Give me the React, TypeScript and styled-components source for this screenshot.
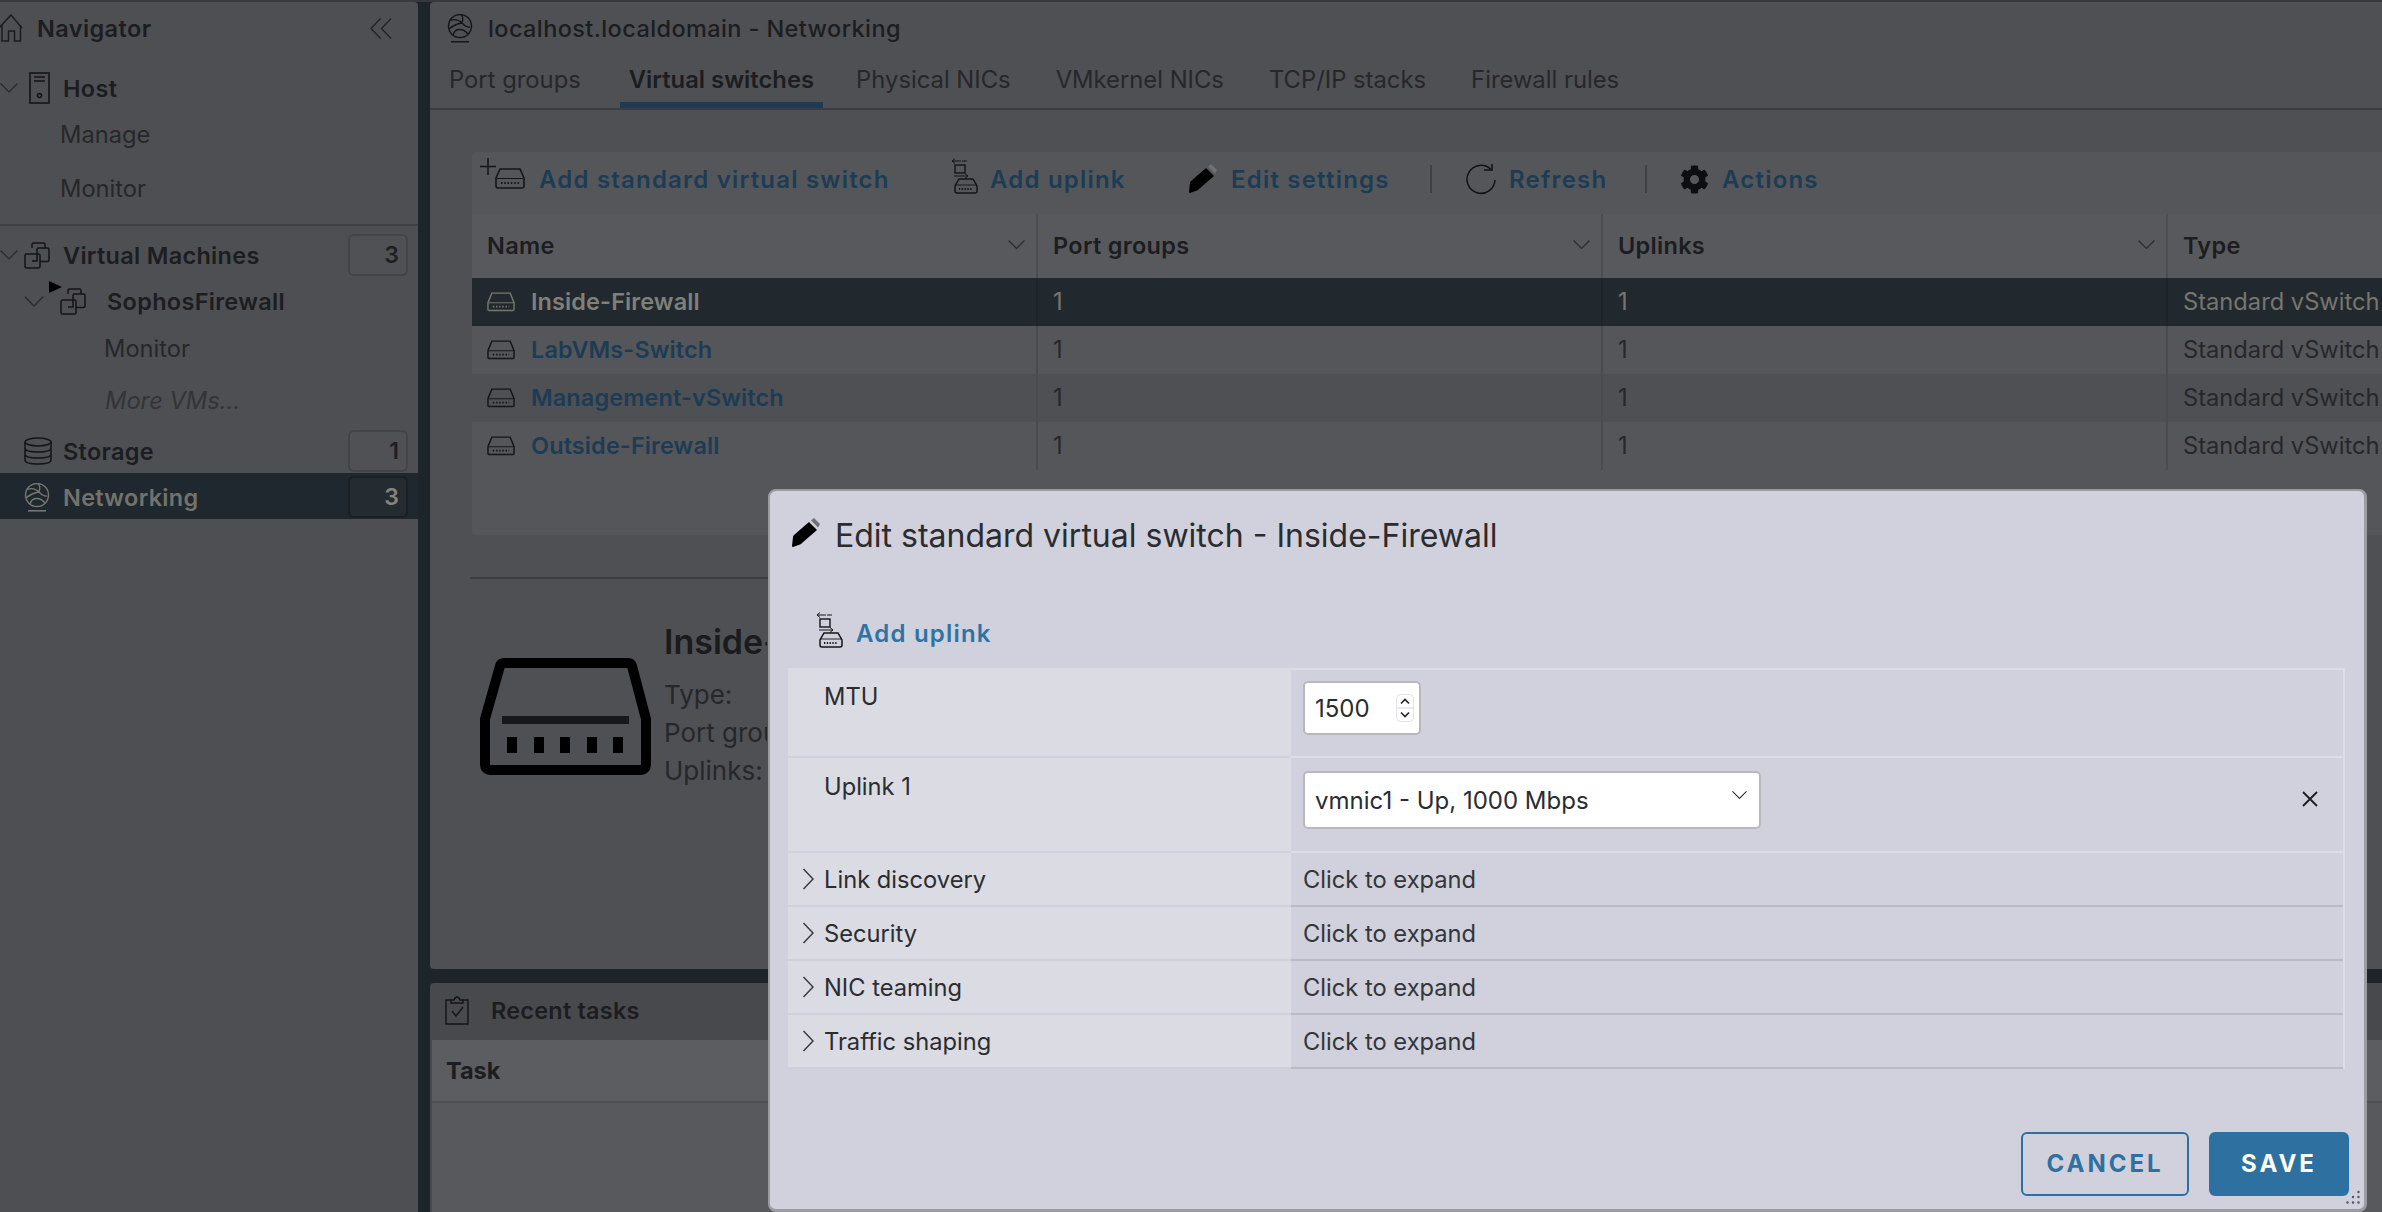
import { FC, ReactNode } from 'react';
import styled, { createGlobalStyle } from 'styled-components';
import { FaCog } from 'react-icons/fa';

const GlobalStyle = createGlobalStyle`
  html, body {
    margin: 0;
    padding: 0;
    background: #1d252b;
    font-family: Inter, "Liberation Sans", sans-serif;
  }
  * { box-sizing: border-box; }
  svg { display: block; flex-shrink: 0; }
`;

/* icons */
const ChevronDown: FC<{ w?: number }> = ({ w = 18 }) => (
  <svg width={w} height={w * 0.55} viewBox="0 0 18 10" fill="none" stroke="#2a2b2e" strokeWidth="1.3">
    <path d="M0.5 0.5 9 9 17.5 0.5" />
  </svg>
);

const ChevronRight = () => (
  <svg width="12" height="22" viewBox="0 0 12 22" fill="none" stroke="#3a3b40" strokeWidth="1.5">
    <path d="M1.5 1 11 11 1.5 21" />
  </svg>
);

const HomeIcon = () => (
  <svg width="23" height="29" viewBox="0 0 23 29" fill="none" stroke="#1b1c1e" strokeWidth="1.5">
    <path d="M-1 14 11 1 22 14M2 11V27H8.5V17H14.5V27H20.5V11" />
  </svg>
);

const CollapseIcon = () => (
  <svg width="22" height="21" viewBox="0 0 22 21" fill="none" stroke="#232427" strokeWidth="1.4">
    <path d="M10.5 0.5 1 10.5 10.5 20.5M21 0.5 11.5 10.5 21 20.5" />
  </svg>
);

const ServerIcon = () => (
  <svg width="21" height="32" viewBox="0 0 21 32" fill="none" stroke="#141517" strokeWidth="1.6">
    <rect x="1" y="1" width="19" height="30" />
    <path d="M5 5H16M5 9H16" />
    <circle cx="10.5" cy="23.5" r="2" />
  </svg>
);

const VmIcon = () => (
  <svg width="26" height="27" viewBox="0 0 26 27" fill="none" stroke="#141517" strokeWidth="1.5">
    <path d="M8 6V2.5Q8 1 9.5 1H19.5Q21 1 21 2.5V6" />
    <path d="M13 12V7.5Q13 6 14.5 6H23.5Q25 6 25 7.5V18Q25 19.500 23.500 19.500H16" />
    <rect x="1" y="12" width="15" height="14" rx="1.5" />
    <path d="M8 19H13V12" />
  </svg>
);

const StorageIcon = () => (
  <svg width="28" height="28" viewBox="0 0 28 28" fill="none" stroke="#141517" strokeWidth="1.5">
    <ellipse cx="14" cy="5" rx="13" ry="4" />
    <path d="M1 5V23Q1 27 14 27T27 23V5M1 11Q1 15 14 15T27 11M1 17Q1 21 14 21T27 17" />
  </svg>
);

const GlobeIcon: FC<{ color: string }> = ({ color }) => (
  <svg width="26" height="29" viewBox="0 0 26 29" fill="none" stroke={color} strokeWidth="1.4">
    <circle cx="13" cy="12" r="11.500" />
    <path d="M3 6.500Q10 4 15 9T23 13M2 15Q8 10 15 9M6 21.500Q7 16 12 15.500T21 20M15 9Q17 3 14 1" />
    <path d="M4 27.800H22" strokeWidth="1.6" />
  </svg>
);

const SwitchIcon: FC<{ color?: string; w?: number }> = ({ color = '#141517', w = 29 }) => (
  <svg width={w} height={w * 0.7} viewBox="0 0 29 20" fill="none">
    <path d="M5 1H24L28 11V18Q28 19 27 19H2Q1 19 1 18V11Z" stroke={color} strokeWidth="1.500" />
    <path d="M1.500 11H27.500" stroke={color} strokeWidth="1" />
    <path d="M6 15H23" stroke={color} strokeWidth="2" strokeDasharray="1.500 1.800" />
  </svg>
);

const BigSwitchIcon = () => (
  <svg width="171" height="118" viewBox="0 0 171 118" fill="none">
    <path
      d="M24 6H148Q151 6 152 9L166 62V107Q166 113 160 113H11Q5 113 5 107V62L20 9Q21 6 24 6Z"
      stroke="#000"
      strokeWidth="10"
      strokeLinejoin="round"
    />
    <rect x="22" y="59" width="127" height="8" fill="#17181a" />
    <rect x="27" y="80" width="10" height="16" fill="#000" />
    <rect x="54" y="80" width="10" height="16" fill="#000" />
    <rect x="80" y="80" width="10" height="16" fill="#000" />
    <rect x="107" y="80" width="10" height="16" fill="#000" />
    <rect x="133" y="80" width="10" height="16" fill="#000" />
  </svg>
);

const AddSwitchIcon = () => (
  <svg width="46" height="31" viewBox="0 0 46 31" fill="none" stroke="#141517">
    <path d="M8 0V17M0 8.500H16" strokeWidth="1.500" />
    <path d="M20 11H40L44 20V28Q44 30 42 30H18Q16 30 16 28V20Z" strokeWidth="1.600" />
    <path d="M17 20.500H43" strokeWidth="1" />
    <path d="M21 25H39" strokeWidth="2" strokeDasharray="1.500 1.800" />
  </svg>
);

const UplinkIcon: FC<{ color?: string }> = ({ color = '#141517' }) => (
  <svg width="30" height="36" viewBox="0 0 30 36" fill="none" stroke={color}>
    <path d="M10 3H1M4 0.500 1 3 4 5.500M11 3H16" strokeWidth="1" />
    <rect x="4" y="7" width="10" height="8" strokeWidth="1.400" />
    <path d="M3 18H17M14 15.500 17 18 14 20.500" strokeWidth="1" />
    <path d="M8 21H22L26 28V33Q26 35 24 35H6Q4 35 4 33V28Z" strokeWidth="1.500" />
    <path d="M4.500 27H25.500" strokeWidth="0.900" />
    <path d="M8 31H22" strokeWidth="2" strokeDasharray="1.300 1.500" />
  </svg>
);

const PencilIcon = () => (
  <svg width="30" height="29" viewBox="0 0 30 29" fill="none">
    <path d="M1 28 2 19Q2 18 3 17L18 4 26 12 11 25Q10 26 9 26.500L2 29Q1 29 1 28Z" fill="#000" />
    <path d="M20 2.500 23 0 29 6 27 9.500Z" fill="#707075" />
  </svg>
);

const RefreshIcon = () => (
  <svg width="32" height="31" viewBox="0 0 32 31" fill="none" stroke="#111214" strokeWidth="1.500">
    <path d="M26 5.500A14 14 0 1 0 30 16" />
    <path d="M19 6H27V0" />
  </svg>
);

const ClipboardIcon = () => (
  <svg width="24" height="29" viewBox="0 0 24 29" fill="none" stroke="#141517" strokeWidth="1.400">
    <path d="M6 4H1V28H23V4H18" />
    <path d="M6 7V4H9Q10 1 12 1T15 4H18V7Z" />
    <path d="M7 15 11 20 18 11" />
  </svg>
);

const CloseIcon = () => (
  <svg width="16" height="16" viewBox="0 0 16 16" fill="none" stroke="#1e1f22" strokeWidth="1.900">
    <path d="M1 1 15 15M15 1 1 15" />
  </svg>
);

const SpinnerIcon = () => (
  <svg width="18" height="28" viewBox="0 0 18 28" fill="none">
    <rect x="0.500" y="0.500" width="17" height="27" rx="4" stroke="#e4e4e8" fill="#fff" />
    <path d="M0.500 14H17.500" stroke="#d8d8dc" />
    <path d="M5 9.500 9 5.500 13 9.500M5 18.500 9 22.500 13 18.500" stroke="#222327" strokeWidth="1.600" />
  </svg>
);

const GripIcon = () => (
  <svg width="16" height="16" viewBox="0 0 16 16" fill="#55565c">
    <circle cx="13.500" cy="2" r="1.200" />
    <circle cx="8" cy="7" r="1.200" />
    <circle cx="13.500" cy="7" r="1.200" />
    <circle cx="2.500" cy="12.500" r="1.200" />
    <circle cx="8" cy="12.500" r="1.200" />
    <circle cx="13.500" cy="12.500" r="1.200" />
  </svg>
);

/* page frame */
const Page = styled.div`
  width: 2382px;
  height: 1212px;
  overflow: hidden;
  position: relative;
  display: grid;
  grid-template-columns: 418px 1fr;
  column-gap: 12px;
  border-top: 2px solid #37393d;
  background: #1d252b;
`;

/* navigator */
const Sidebar = styled.aside`
  background: #4d4f53;
  border-top-right-radius: 4px;
  display: flex;
  flex-direction: column;
  color: #1c1d20;
`;

const NavHeader = styled.div`
  height: 52px;
  display: flex;
  align-items: center;
  gap: 14px;
  padding-right: 26px;
`;

const NavTitle = styled.span`
  flex: 1;
  font-size: 23.500px;
  font-weight: 600;
  letter-spacing: 0.4px;
`;

const TreeRow = styled.div<{ $h: number; $cols: string; $active?: boolean; $pl?: number; $mt?: number }>`
  height: ${({ $h }) => $h}px;
  margin-top: ${({ $mt }) => $mt ?? 0}px;
  display: grid;
  grid-template-columns: ${({ $cols }) => $cols} 1fr auto;
  align-items: center;
  padding: ${({ $active }) => ($active ? 2 : 0)}px 10px 0 ${({ $pl }) => $pl ?? 0}px;
  background: ${({ $active }) => ($active ? '#20282f' : 'transparent')};
  color: ${({ $active }) => ($active ? '#73726c' : '#1c1d20')};
`;

const TreeLabel = styled.span`
  font-size: 23.500px;
  font-weight: 600;
  letter-spacing: 0.3px;
  white-space: nowrap;
`;

const IconSlot = styled.span<{ $ml?: number }>`
  position: relative;
  display: block;
  margin-left: ${({ $ml }) => $ml ?? 0}px;
`;

const RunningMark = styled.span`
  position: absolute;
  left: -11px;
  top: -7px;
  width: 0;
  height: 0;
  border-left: 13px solid #000;
  border-top: 6px solid transparent;
  border-bottom: 6px solid transparent;
`;

const SubItem = styled.div<{ $h: number; $pl: number; $mt?: number; $muted?: boolean }>`
  height: ${({ $h }) => $h}px;
  margin-top: ${({ $mt }) => $mt ?? 0}px;
  padding-left: ${({ $pl }) => $pl}px;
  display: flex;
  align-items: center;
  font-size: 23.700px;
  font-style: ${({ $muted }) => ($muted ? 'italic' : 'normal')};
  color: ${({ $muted }) => ($muted ? '#333437' : '#26272a')};
`;

const NavDivider = styled.div`
  height: 2px;
  background: #3e4044;
  flex-shrink: 0;
`;

const Badge = styled.span<{ $active?: boolean }>`
  width: 60px;
  height: 42px;
  border: 2px solid ${({ $active }) => ($active ? '#1a2026' : '#434448')};
  background: ${({ $active }) => ($active ? '#242b31' : '#4f5155')};
  border-radius: 6px;
  display: flex;
  align-items: center;
  justify-content: flex-end;
  padding-right: 7px;
  font-size: 23px;
  font-weight: 600;
  color: ${({ $active }) => ($active ? '#86847d' : '#1f2023')};
`;

/* main column */
const MainColumn = styled.div`
  display: flex;
  flex-direction: column;
  min-width: 0;
`;

const MainPanel = styled.main`
  height: 967px;
  flex-shrink: 0;
  background: #4e5054;
  border-top-left-radius: 4px;
  border-bottom-left-radius: 4px;
  overflow: hidden;
`;

const PanelHeader = styled.div`
  height: 52px;
  display: flex;
  align-items: center;
  gap: 15px;
  padding-left: 17px;
`;

const PanelTitle = styled.span`
  font-size: 23.500px;
  font-weight: 500;
  letter-spacing: 0.4px;
  color: #1c1d20;
`;

const TabBar = styled.nav`
  height: 56px;
  display: flex;
  align-items: stretch;
  gap: 27px;
  padding-left: 10px;
  border-bottom: 2px solid #3c3d41;
`;

const Tab = styled.span<{ $active?: boolean }>`
  display: flex;
  align-items: center;
  height: 54px;
  padding: 3px 9px 0;
  margin-right: ${({ $active }) => ($active ? -3 : 0)}px;
  font-size: 23.800px;
  font-weight: ${({ $active }) => ($active ? 600 : 400)};
  color: ${({ $active }) => ($active ? '#1c1d20' : '#26272a')};
  border-bottom: 6px solid ${({ $active }) => ($active ? '#1f3a52' : 'transparent')};
  &:first-child { margin-right: 3px; }
`;

const Content = styled.div`
  padding: 42px 0 0 42px;
`;

const Card = styled.section`
  height: 383px;
  background: #55565a;
  border-radius: 4px 0 0 4px;
`;

const Toolbar = styled.div`
  height: 62px;
  display: flex;
  align-items: center;
  padding: 0 0 8px 8px;
`;

const ToolItem = styled.div<{ $w: number }>`
  width: ${({ $w }) => $w}px;
  display: flex;
  align-items: center;
  flex-shrink: 0;
`;

const ToolIcon = styled.span<{ $up?: number }>`
  display: block;
  margin-bottom: ${({ $up }) => $up ?? 0}px;
`;

const ToolLabel = styled.span<{ $ml: number }>`
  margin-left: ${({ $ml }) => $ml}px;
  font-size: 24px;
  font-weight: 600;
  letter-spacing: 1.200px;
  color: #1c3c54;
  white-space: nowrap;
`;

const ToolSep = styled.span`
  width: 2px;
  height: 28px;
  background: #3f4044;
  margin-right: 33px;
`;

const TableGrid = styled.div`
  display: grid;
  grid-template-columns: 566px 565px 565px 300px;
`;

const HeadCell = styled.div`
  height: 64px;
  background: #58595d;
  display: flex;
  align-items: center;
  justify-content: space-between;
  padding: 0 11px 2px 15px;
  border-right: 2px solid #4c4d51;
  font-size: 23.500px;
  font-weight: 600;
  letter-spacing: 0.3px;
  color: #1c1d20;
  &:last-child { border-right: 0; }
`;

const Cell = styled.div<{ $tone: 'selected' | 'even' | 'odd' }>`
  height: 48px;
  display: flex;
  align-items: center;
  gap: 16px;
  padding: 0 15px;
  border-right: 2px solid ${({ $tone }) => ($tone === 'selected' ? '#1c2227' : '#4a4b4f')};
  background: ${({ $tone }) =>
    $tone === 'selected' ? '#22292e' : $tone === 'even' ? '#55565a' : '#4e5054'};
  color: ${({ $tone }) => ($tone === 'selected' ? '#77766f' : '#26272a')};
  font-size: 23.700px;
  line-height: 30px;
  white-space: nowrap;
  &:nth-child(4n) { border-right: 0; }
`;

const NameText = styled.span<{ $selected: boolean }>`
  font-size: 23.500px;
  font-weight: 600;
  letter-spacing: 0.1px;
  color: ${({ $selected }) => ($selected ? '#80807a' : '#1c3c54')};
`;

const DetailLine = styled.div`
  height: 2px;
  margin: 42px 0 0 -2px;
  width: 300px;
  background: #3c3d41;
`;

const Detail = styled.div`
  display: flex;
  padding: 43px 0 0 8px;
`;

const DetailIconBox = styled.div`
  margin-top: 35px;
  width: 184px;
`;

/* the rest of this text sits behind the dialog */
const DetailText = styled.div`
  width: 103px;
  overflow: hidden;
  white-space: nowrap;
`;

const DetailHeading = styled.div`
  height: 40px;
  line-height: 40px;
  margin-bottom: 14px;
  font-size: 34px;
  font-weight: 600;
  color: #1a1b1d;
`;

const DetailRow = styled.div`
  height: 38px;
  line-height: 38px;
  font-size: 26px;
  color: #26272a;
`;

/* recent tasks */
const TasksPanel = styled.section`
  margin-top: 14px;
  flex: 1;
  background: #48494d;
  border-top-left-radius: 4px;
  display: flex;
  flex-direction: column;
`;

const TasksHeader = styled.div`
  height: 57px;
  display: flex;
  align-items: center;
  gap: 22px;
  padding: 0 0 3px 15px;
  font-size: 23.500px;
  font-weight: 600;
  letter-spacing: 0.2px;
  color: #1c1d20;
`;

const TasksBody = styled.div`
  flex: 1;
  margin-left: 2px;
  background: #58595d;
`;

const TasksHead = styled.div`
  height: 63px;
  display: flex;
  align-items: center;
  padding-left: 14px;
  background: #5c5d60;
  border-bottom: 2px solid #4e4f53;
  font-size: 23.500px;
  font-weight: 700;
  color: #1c1d20;
`;

/* modal */
const Modal = styled.div`
  position: absolute;
  left: 768px;
  top: 487px;
  width: 1599px;
  height: 723px;
  background: #d0d1dc;
  border: 2px solid #9b9ca2;
  border-right-width: 3px;
  border-bottom-width: 3px;
  border-radius: 8px;
  display: flex;
  flex-direction: column;
  color: #2b2c30;
`;

const ModalHead = styled.div`
  height: 88px;
  display: flex;
  align-items: center;
  gap: 14px;
  padding-left: 21px;
`;

const ModalTitle = styled.h2`
  margin: 0;
  font-size: 32px;
  font-weight: 400;
  color: #2b2c30;
`;

const ModalAction = styled.div`
  height: 89px;
  display: flex;
  align-items: flex-start;
  gap: 10px;
  padding: 33px 0 0 46px;
`;

const ModalActionLabel = styled.span`
  margin-top: 7px;
  font-size: 24px;
  font-weight: 600;
  letter-spacing: 1.200px;
  color: #2e73a2;
`;

const FormTable = styled.div`
  margin-left: 18px;
  width: 1557px;
  border-right: 2px solid #dcdde5;
`;

const FormRow = styled.div<{ $h: number }>`
  height: ${({ $h }) => $h}px;
  display: grid;
  grid-template-columns: 503px 1fr;
`;

const FormLabel = styled.div<{ $top?: boolean }>`
  background: #dadbe3;
  display: flex;
  align-items: ${({ $top }) => ($top ? 'flex-start' : 'center')};
  gap: 10px;
  padding: ${({ $top }) => ($top ? '14px 0 0 36px' : '0 0 0 14px')};
  border-bottom: 2px solid #cfd0d9;
  font-size: 23.700px;
  color: #2b2c30;
`;

const FormValue = styled.div<{ $strong?: boolean; $first?: boolean; $field?: boolean }>`
  display: flex;
  align-items: ${({ $field }) => ($field ? 'flex-start' : 'center')};
  padding: ${({ $field, $first }) => ($field ? ($first ? '11px' : '13px') : '0')} 0 0 12px;
  position: relative;
  border-top: ${({ $first }) => ($first ? '2px solid #dcdde5' : '0')};
  border-bottom: 2px solid ${({ $strong }) => ($strong ? '#b9bac4' : '#dcdde5')};
  font-size: 23.700px;
  color: #34353a;
`;

const NumberBox = styled.div`
  width: 118px;
  height: 54px;
  background: #fff;
  border: 2px solid #b9b9bd;
  border-radius: 5px;
  display: flex;
  align-items: center;
  justify-content: space-between;
  padding: 0 5px 0 10px;
  font-size: 24px;
  color: #2b2c30;
`;

const SelectBox = styled.div`
  width: 458px;
  height: 58px;
  background: #fff;
  border: 2px solid #b9b9bd;
  border-radius: 5px;
  display: flex;
  align-items: center;
  justify-content: space-between;
  padding: 0 12px 0 10px;
  font-size: 24px;
  color: #2b2c30;
`;

const SelectChevron = styled.span`
  margin-top: -10px;
`;

const RemoveButton = styled.span`
  position: absolute;
  right: 25px;
  top: 33px;
`;

const ModalFooter = styled.div`
  flex: 1;
  display: flex;
  justify-content: flex-end;
  align-items: flex-start;
  gap: 20px;
  padding: 63px 15px 0 0;
  position: relative;
`;

const Button = styled.button<{ $primary?: boolean }>`
  height: 64px;
  width: ${({ $primary }) => ($primary ? 140 : 168)}px;
  padding: 0 0 2px;
  border: 2px solid #2e71a0;
  border-radius: 6px;
  background: ${({ $primary }) => ($primary ? '#2e71a0' : 'transparent')};
  color: ${({ $primary }) => ($primary ? '#fdfdf0' : '#2e71a0')};
  font-family: inherit;
  font-size: 24px;
  font-weight: 700;
  letter-spacing: 3px;
`;

const Grip = styled.span`
  position: absolute;
  right: 3px;
  bottom: 3px;
`;

const collapsed = ['Link discovery', 'Security', 'NIC teaming', 'Traffic shaping'];
const tabs = ['Port groups', 'Virtual switches', 'Physical NICs', 'VMkernel NICs', 'TCP/IP stacks', 'Firewall rules'];
const columns = ['Name', 'Port groups', 'Uplinks', 'Type'];
const switches = ['Inside-Firewall', 'LabVMs-Switch', 'Management-vSwitch', 'Outside-Firewall'];

const Tool: FC<{ w: number; ml: number; up?: number; icon: ReactNode; label: string; sep?: boolean }> = ({ w, ml, up, icon, label, sep }) => (
  <ToolItem $w={w}>
    {sep && <ToolSep />}
    <ToolIcon $up={up}>{icon}</ToolIcon>
    <ToolLabel $ml={ml}>{label}</ToolLabel>
  </ToolItem>
);

const App: FC = () => {
  return (
    <>
      <GlobalStyle />
      <Page>
        <Sidebar>
          <NavHeader>
            <HomeIcon />
            <NavTitle>Navigator</NavTitle>
            <CollapseIcon />
          </NavHeader>
          <TreeRow $h={68} $cols="24px 39px">
            <ChevronDown />
            <IconSlot $ml={5}><ServerIcon /></IconSlot>
            <TreeLabel>Host</TreeLabel>
          </TreeRow>
          <SubItem $h={24} $pl={60}>Manage</SubItem>
          <SubItem $h={72} $mt={6} $pl={60}>Monitor</SubItem>
          <NavDivider />
          <TreeRow $h={58} $cols="24px 39px">
            <ChevronDown />
            <VmIcon />
            <TreeLabel>Virtual Machines</TreeLabel>
            <Badge>3</Badge>
          </TreeRow>
          <TreeRow $h={34} $pl={24} $cols="36px 47px">
            <ChevronDown w={20} />
            <IconSlot>
              <RunningMark />
              <VmIcon />
            </IconSlot>
            <TreeLabel>SophosFirewall</TreeLabel>
          </TreeRow>
          <SubItem $h={60} $pl={104}>Monitor</SubItem>
          <SubItem $h={44} $pl={105} $muted>More VMs...</SubItem>
          <TreeRow $h={44} $mt={7} $cols="24px 39px">
            <span />
            <StorageIcon />
            <TreeLabel>Storage</TreeLabel>
            <Badge>1</Badge>
          </TreeRow>
          <TreeRow $h={46} $cols="24px 39px" $active>
            <span />
            <GlobeIcon color="#77766f" />
            <TreeLabel>Networking</TreeLabel>
            <Badge $active>3</Badge>
          </TreeRow>
        </Sidebar>

        <MainColumn>
          <MainPanel>
            <PanelHeader>
              <GlobeIcon color="#141517" />
              <PanelTitle>localhost.localdomain - Networking</PanelTitle>
            </PanelHeader>
            <TabBar>
              {tabs.map((tab) => (
                <Tab key={tab} $active={tab === 'Virtual switches'}>{tab}</Tab>
              ))}
            </TabBar>
            <Content>
              <Card>
                <Toolbar>
                  <Tool w={471} ml={13} up={11} icon={<AddSwitchIcon />} label="Add standard virtual switch" />
                  <Tool w={237} ml={9} up={6} icon={<UplinkIcon />} label="Add uplink" />
                  <Tool w={242} ml={13} up={2} icon={<PencilIcon />} label="Edit settings" />
                  <Tool w={215} ml={12} sep icon={<RefreshIcon />} label="Refresh" />
                  <Tool w={200} ml={13} sep icon={<FaCog size={29} color="#0d0e10" />} label="Actions" />
                </Toolbar>
                <TableGrid>
                  {columns.map((col, i) => (
                    <HeadCell key={col}>
                      {col}
                      {i < 3 && <ChevronDown w={17} />}
                    </HeadCell>
                  ))}
                  {switches.map((name, i) => {
                    const tone = i === 0 ? 'selected' : i % 2 === 1 ? 'even' : 'odd';
                    return [
                      <Cell key={name} $tone={tone}>
                        <SwitchIcon w={28} color={i === 0 ? '#77766f' : '#141517'} />
                        <NameText $selected={i === 0}>{name}</NameText>
                      </Cell>,
                      <Cell key={name + 'pg'} $tone={tone}>1</Cell>,
                      <Cell key={name + 'up'} $tone={tone}>1</Cell>,
                      <Cell key={name + 'ty'} $tone={tone}>Standard vSwitch</Cell>,
                    ];
                  })}
                </TableGrid>
              </Card>
              <DetailLine />
              <Detail>
                <DetailIconBox><BigSwitchIcon /></DetailIconBox>
                <DetailText>
                  <DetailHeading>Inside-Firewall</DetailHeading>
                  <DetailRow>Type:</DetailRow>
                  <DetailRow>Port groups:</DetailRow>
                  <DetailRow>Uplinks:</DetailRow>
                </DetailText>
              </Detail>
            </Content>
          </MainPanel>

          <TasksPanel>
            <TasksHeader>
              <ClipboardIcon />
              Recent tasks
            </TasksHeader>
            <TasksBody>
              <TasksHead>Task</TasksHead>
            </TasksBody>
          </TasksPanel>
        </MainColumn>

        <Modal>
          <ModalHead>
            <ToolIcon $up={6}><PencilIcon /></ToolIcon>
            <ModalTitle>Edit standard virtual switch - Inside-Firewall</ModalTitle>
          </ModalHead>
          <ModalAction>
            <UplinkIcon />
            <ModalActionLabel>Add uplink</ModalActionLabel>
          </ModalAction>
          <FormTable>
            <FormRow $h={90}>
              <FormLabel $top>MTU</FormLabel>
              <FormValue $field $first>
                <NumberBox>
                  1500
                  <SpinnerIcon />
                </NumberBox>
              </FormValue>
            </FormRow>
            <FormRow $h={95}>
              <FormLabel $top>Uplink 1</FormLabel>
              <FormValue $field>
                <SelectBox>
                  vmnic1 - Up, 1000 Mbps
                  <SelectChevron><ChevronDown w={15} /></SelectChevron>
                </SelectBox>
                <RemoveButton><CloseIcon /></RemoveButton>
              </FormValue>
            </FormRow>
            {collapsed.map((label) => (
              <FormRow key={label} $h={54}>
                <FormLabel>
                  <ChevronRight />
                  {label}
                </FormLabel>
                <FormValue $strong>Click to expand</FormValue>
              </FormRow>
            ))}
          </FormTable>
          <ModalFooter>
            <Button>CANCEL</Button>
            <Button $primary>SAVE</Button>
            <Grip><GripIcon /></Grip>
          </ModalFooter>
        </Modal>
      </Page>
    </>
  );
};

export default App;
